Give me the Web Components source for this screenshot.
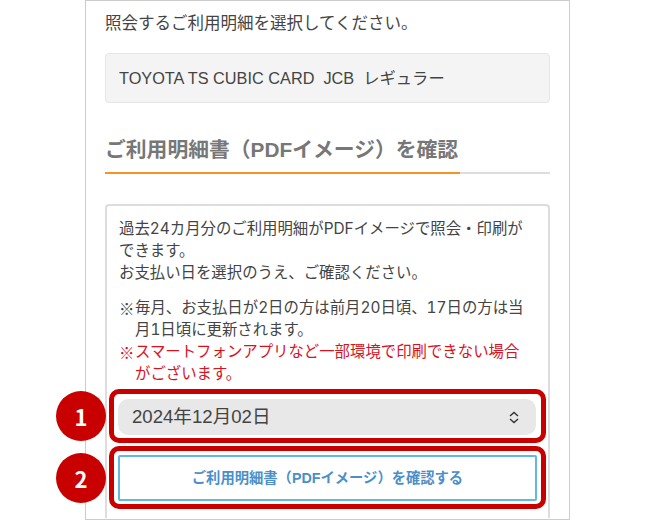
<!DOCTYPE html>
<html lang="ja">
<head>
<meta charset="utf-8">
<title>ご利用明細書</title>
<style>
  html, body { margin: 0; padding: 0; background: #fff; }
  body { font-family: "Liberation Sans", "Noto Sans CJK JP", sans-serif; overflow: hidden; height: 520px; }
</style>
</head>
<body>
<statement-page>
  <p-lead>照会するご利用明細を選択してください。</p-lead>
  <card-name>TOYOTA TS CUBIC CARD&nbsp;&nbsp;JCB&nbsp;&nbsp;レギュラー</card-name>
  <section-title>ご利用明細書（PDFイメージ）を確認</section-title>
  <statement-box>
    <p class="t" slot="intro">過去24カ月分のご利用明細がPDFイメージで照会・印刷ができます。<br>お支払い日を選択のうえ、ご確認ください。</p>
    <note-item slot="notes">毎月、お支払日が2日の方は前月20日頃、17日の方は当月1日頃に更新されます。</note-item>
    <note-item slot="notes" red>スマートフォンアプリなど一部環境で印刷できない場合がございます。</note-item>
    <date-select slot="select" value="2024年12月02日"></date-select>
    <confirm-button slot="action">ご利用明細書（PDFイメージ）を確認する</confirm-button>
  </statement-box>
</statement-page>
<script>
  const define = (name, css, html) => {
    customElements.define(
      name,
      class extends HTMLElement {
        constructor() {
          super();
          this.attachShadow({ mode: "open" }).innerHTML = `<style>${css}</style>${html}`;
        }
      }
    );
  };

  define(
    "statement-page",
    `:host { display: block; box-sizing: border-box; position: relative; width: 485px; height: 520px; margin-left: 85px; padding: 11px 19px 0; border: 1px solid #ccc; color: #333; }`,
    `<slot></slot>`
  );

  define(
    "p-lead",
    `:host { display: block; font-size: 16.5px; line-height: 22px; color: #444; }`,
    `<slot></slot>`
  );

  define(
    "card-name",
    `:host { display: block; box-sizing: border-box; height: 50px; margin-top: 19px; padding: 0 13px; border: 1px solid #e6e6e6; border-radius: 4px; background: #f4f4f4; font-size: 16.3px; line-height: 48px; color: #444; }`,
    `<slot></slot>`
  );

  define(
    "section-title",
    `:host { display: block; position: relative; box-sizing: border-box; height: 51px; margin-top: 20px; padding-top: 11px; border-bottom: 2px solid #ddd; font-size: 20.8px; line-height: 32px; font-weight: 700; color: #777; }
     :host::after { content: ""; position: absolute; left: 0; bottom: -2px; width: 355px; height: 2px; background: #f7931e; }`,
    `<slot></slot>`
  );

  define(
    "statement-box",
    `:host { display: block; box-sizing: border-box; height: 314px; margin-top: 30px; padding: 12px 12px 0; border: 2px solid #ddd; border-radius: 4px 4px 0 0; border-bottom: 0; font-family: Inter, "Liberation Sans", "Noto Sans CJK JP", sans-serif; font-feature-settings: "tnum"; font-size: 15.4px; line-height: 22.2px; color: #444; }
     ::slotted(.t) { margin: 0 0 12px; }
     .select { margin: 13.6px 0 0 -1px; font-family: "Liberation Sans", "Noto Sans CJK JP", sans-serif; }
     .action { margin: 20px -1px 0; font-family: "Liberation Sans", "Noto Sans CJK JP", sans-serif; }`,
    `<slot name="intro"></slot><slot name="notes"></slot>
     <div class="select"><slot name="select"></slot></div>
     <div class="action"><slot name="action"></slot></div>`
  );

  customElements.define(
    "note-item",
    class NoteItem extends HTMLElement {
      constructor() {
        super();
        this.attachShadow({ mode: "open" }).innerHTML = `
          <style>
            :host { display: flex; font-size: 15.4px; line-height: 22.2px; color: #444; }
            :host([red]) { color: #d9121f; }
            .mark { flex: none; width: 16px; font-family: "Noto Sans CJK JP", sans-serif; }
            .txt { padding-right: 6px; }
          </style>
          <span class="mark">※</span><div class="txt"><slot></slot></div>`;
      }
    }
  );

  customElements.define(
    "date-select",
    class DateSelect extends HTMLElement {
      constructor() {
        super();
        this.attachShadow({ mode: "open" }).innerHTML = `
          <style>
            :host { display: flex; align-items: center; justify-content: space-between; position: relative; box-sizing: border-box; height: 36px; padding: 0 16px 0 14px; border-radius: 10px; background: #e8e8e8; font-size: 18.6px; color: #444; }
            :host::after { content: ""; position: absolute; z-index: 1; left: -9px; right: -10px; top: -10px; bottom: -8px; border: 5px solid #c80000; border-radius: 10px; }
            .num { position: absolute; left: -62px; top: -8px; width: 50px; height: 50px; border-radius: 50%; background: #c80000; color: #fff; font-family: "Noto Sans CJK JP", sans-serif; font-size: 22px; font-weight: 700; line-height: 50px; text-align: center; }
            svg { display: block; }
          </style>
          <span class="val"></span>
          <svg width="12" height="13" viewBox="0 0 12 13" fill="none" stroke="#333" stroke-width="1.4"><path d="M2 5 6 1.5 10 5M2 8l4 3.5L10 8"/></svg>
          <span class="num">1</span>`;
        this.shadowRoot.querySelector(".val").textContent = this.getAttribute("value");
      }
    }
  );

  customElements.define(
    "confirm-button",
    class ConfirmButton extends HTMLElement {
      constructor() {
        super();
        this.attachShadow({ mode: "open" }).innerHTML = `
          <style>
            :host { display: flex; align-items: center; justify-content: center; position: relative; box-sizing: border-box; height: 46px; border: 2px solid #62b8e0; border-radius: 2px; background: #fff; font-size: 14.3px; font-weight: 700; color: #4a8fc9; }
            :host::after { content: ""; position: absolute; z-index: 1; left: -11px; right: -11px; top: -11px; bottom: -10px; border: 5px solid #c80000; border-radius: 10px; }
            .num { position: absolute; left: -64px; top: -4px; width: 50px; height: 50px; border-radius: 50%; background: #c80000; color: #fff; font-family: "Noto Sans CJK JP", sans-serif; font-size: 22px; font-weight: 700; line-height: 50px; text-align: center; }
          </style>
          <slot></slot><span class="num">2</span>`;
      }
    }
  );
</script>
</body>
</html>
